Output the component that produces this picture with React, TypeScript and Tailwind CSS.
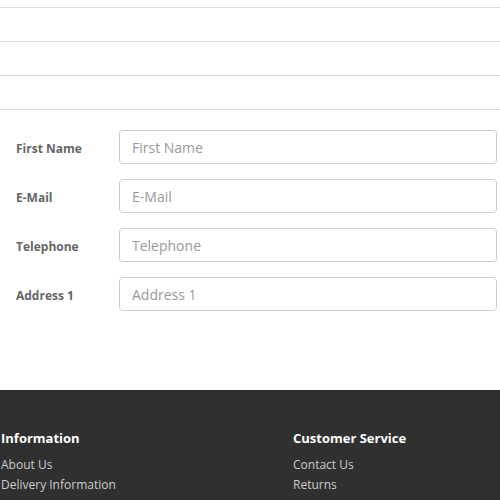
const fields = ['First Name', 'E-Mail', 'Telephone', 'Address 1']

export default function App() {
    return (
        <div className="w-[500px] h-[500px] overflow-hidden bg-white" style={{ fontFamily: '"Open Sans", sans-serif' }}>
            <div className="h-[8px] border-b border-[#dddddd]"></div>
            <div className="h-[34px] border-b border-[#dddddd]"></div>
            <div className="h-[34px] border-b border-[#dddddd]"></div>
            <div className="h-[34px] border-b border-[#dddddd]"></div>

            <form className="mt-[20px] flex flex-col gap-[15px] pr-[3px]">
                {fields.map(f => (
                    <div key={f} className="flex items-start">
                        <label className="w-[119px] pl-[16px] pt-[10px] leading-[17px] text-[12px] font-bold text-[#666666]">{f}</label>
                        <input
                            type="text"
                            placeholder={f}
                            className="flex-1 h-[34px] px-[12px] rounded-[4px] border border-[#cccccc] text-[14px] text-[#555555] placeholder:text-[#999999] outline-none"
                        />
                    </div>
                ))}
            </form>

            <footer className="mt-[79px] bg-[#303030] h-[200px] pt-[40px] grid grid-cols-[292px_1fr] pl-[1px]">
                <div>
                    <h5 className="text-[13px] font-bold text-white leading-[16px] mb-[9px]">Information</h5>
                    <ul className="text-[12px] text-[#cccccc] leading-[20px]">
                        <li>About Us</li>
                        <li>Delivery Information</li>
                    </ul>
                </div>
                <div>
                    <h5 className="text-[13px] font-bold text-white leading-[16px] mb-[9px]">Customer Service</h5>
                    <ul className="text-[12px] text-[#cccccc] leading-[20px]">
                        <li>Contact Us</li>
                        <li>Returns</li>
                    </ul>
                </div>
            </footer>
        </div>
    )
}
